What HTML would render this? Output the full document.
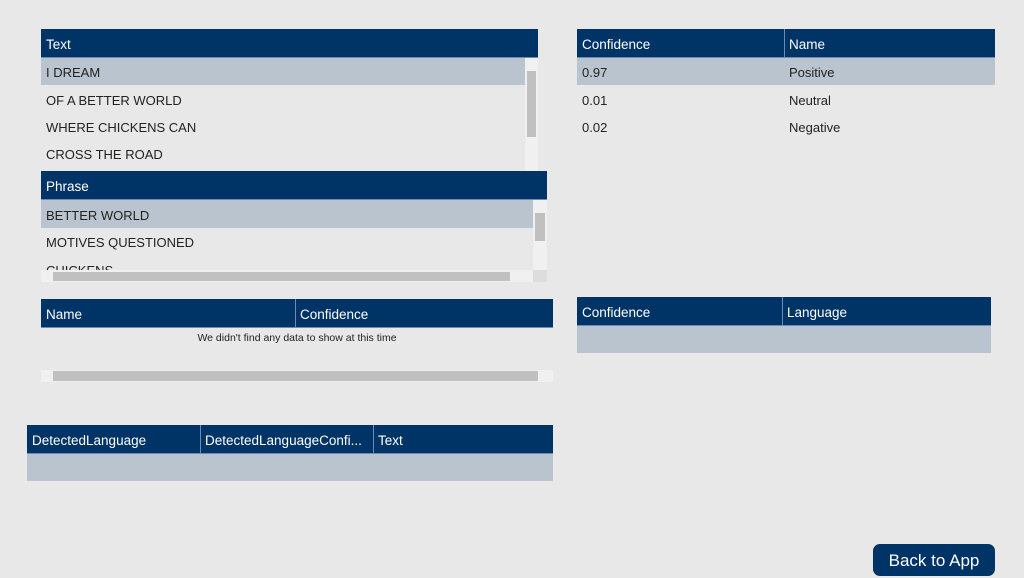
<!DOCTYPE html>
<html><head><meta charset="utf-8"><style>
*{margin:0;padding:0;box-sizing:border-box}
body{width:1024px;height:578px;background:#e8e8e8;font-family:"Liberation Sans",sans-serif;position:relative;overflow:hidden;color:#222}
.a{position:absolute}
.h{background:#003366;color:#fff;font-size:13.5px;border-bottom:1px solid #6b8db5}
.h span{position:absolute;top:1px;height:100%;display:flex;align-items:center;padding-left:5px}
.d{position:absolute;top:0;bottom:0;width:1px;background:#6b8db5}
.sel{background:#b9c4ce}
.r{font-size:13px;display:flex;align-items:center;padding-left:5px;padding-top:2px}
.sb{background:#f0f0f0}
.th{background:#c0c0c0}
</style></head><body>

<div class="a h" style="left:41px;top:29px;width:497px;height:29px"><span>Text</span></div>
<div class="a sel" style="left:41px;top:58px;width:484px;height:27px"></div>
<div class="a r" style="left:41px;top:58px;height:27px">I DREAM</div>
<div class="a r" style="left:41px;top:86px;height:27px">OF A BETTER WORLD</div>
<div class="a r" style="left:41px;top:113px;height:27px">WHERE CHICKENS CAN</div>
<div class="a r" style="left:41px;top:140px;height:27px">CROSS THE ROAD</div>
<div class="a sb" style="left:525px;top:58px;width:13px;height:113px"></div>
<div class="a th" style="left:527px;top:71px;width:9px;height:66px"></div>

<div class="a h" style="left:41px;top:171px;width:506px;height:29px"><span>Phrase</span></div>
<div class="a" style="left:41px;top:200px;width:506px;height:70px;overflow:hidden">
<div class="a sel" style="left:0;top:0;width:492px;height:28px"></div>
<div class="a r" style="left:0;top:0;height:28px">BETTER WORLD</div>
<div class="a r" style="left:0;top:28px;height:27px">MOTIVES QUESTIONED</div>
<div class="a r" style="left:0;top:56px;height:27px">CHICKENS</div>
</div>
<div class="a sb" style="left:533px;top:200px;width:14px;height:70px"></div>
<div class="a th" style="left:535px;top:213px;width:10px;height:28px"></div>
<div class="a sb" style="left:41px;top:270px;width:492px;height:12px"></div>
<div class="a th" style="left:53px;top:272px;width:457px;height:9px"></div>
<div class="a" style="left:533px;top:270px;width:14px;height:12px;background:#ddd"></div>

<div class="a h" style="left:41px;top:299px;width:512px;height:29px"><span>Name</span><span style="left:254px">Confidence</span><div class="d" style="left:254px"></div></div>
<div class="a" style="left:41px;top:332px;width:512px;text-align:center;font-size:10.5px">We didn't find any data to show at this time</div>
<div class="a sb" style="left:41px;top:370px;width:512px;height:12px"></div>
<div class="a th" style="left:53px;top:371px;width:485px;height:10px"></div>

<div class="a h" style="left:27px;top:425px;width:526px;height:29px"><span>DetectedLanguage</span><span style="left:173px">DetectedLanguageConfi...</span><span style="left:346px">Text</span><div class="d" style="left:173px"></div><div class="d" style="left:346px"></div></div>
<div class="a sel" style="left:27px;top:454px;width:526px;height:27px"></div>

<div class="a h" style="left:577px;top:29px;width:418px;height:29px"><span>Confidence</span><span style="left:207px">Name</span><div class="d" style="left:207px"></div></div>
<div class="a sel" style="left:577px;top:58px;width:418px;height:27px"></div>
<div class="a r" style="left:577px;top:58px;height:27px">0.97</div>
<div class="a r" style="left:784px;top:58px;height:27px">Positive</div>
<div class="a r" style="left:577px;top:86px;height:27px">0.01</div>
<div class="a r" style="left:784px;top:86px;height:27px">Neutral</div>
<div class="a r" style="left:577px;top:113px;height:27px">0.02</div>
<div class="a r" style="left:784px;top:113px;height:27px">Negative</div>

<div class="a h" style="left:577px;top:297px;width:414px;height:29px"><span>Confidence</span><span style="left:205px">Language</span><div class="d" style="left:205px"></div></div>
<div class="a sel" style="left:577px;top:326px;width:414px;height:27px"></div>

<div class="a" style="left:873px;top:544px;width:122px;height:32px;background:#003366;border-radius:7px;color:#fff;font-size:17px;display:flex;align-items:center;justify-content:center;padding-top:1px">Back to App</div>
</body></html>
